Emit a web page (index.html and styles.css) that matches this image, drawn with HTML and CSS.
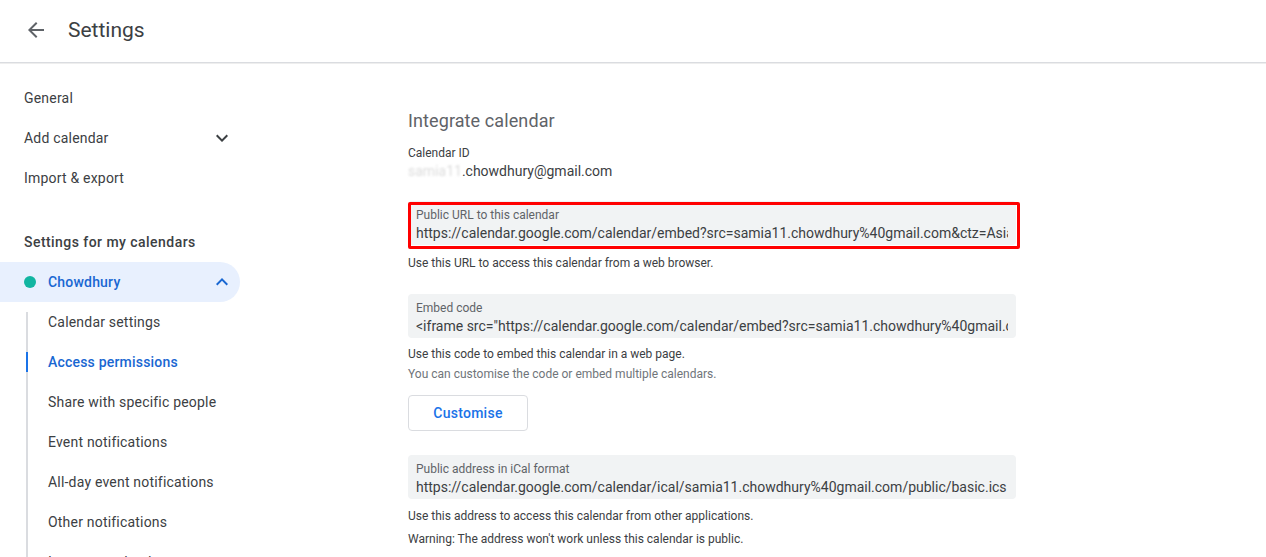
FILE: index.html
```html
<!DOCTYPE html>
<html>
<head>
  <title>Settings</title>
  <link rel="stylesheet" href="styles.css">
</head>
<body>
  <header class="topbar">
    <svg class="back" width="24" height="24" viewBox="0 0 24 24"><path d="M20 11H7.83l5.59-5.59L12 4l-8 8 8 8 1.41-1.41L7.83 13H20v-2z"/></svg>
    <h1>Settings</h1>
  </header>

  <div class="page">
    <nav class="sidebar">
      <div class="item">General</div>
      <div class="item">Add calendar
        <svg class="chev" width="24" height="24" viewBox="0 0 24 24"><path d="M16.59 8.59L12 13.17 7.41 8.59 6 10l6 6 6-6z"/></svg>
      </div>
      <div class="item">Import &amp; export</div>

      <div class="section">Settings for my calendars</div>
      <div class="item cal">
        <span class="dot"></span>Chowdhury
        <svg class="chev" width="24" height="24" viewBox="0 0 24 24"><path d="M7.41 15.41L12 10.83l4.59 4.58L18 14l-6-6-6 6z"/></svg>
      </div>
      <div class="sub">
        <div class="item">Calendar settings</div>
        <div class="item active">Access permissions</div>
        <div class="item">Share with specific people</div>
        <div class="item">Event notifications</div>
        <div class="item">All-day event notifications</div>
        <div class="item">Other notifications</div>
        <div class="item">Integrate calendar</div>
        <div class="item">Remove calendar</div>
      </div>
    </nav>

    <main class="content">
      <h2>Integrate calendar</h2>

      <div class="label">Calendar ID</div>
      <div class="value"><span class="blur">samia11</span>.chowdhury@gmail.com</div>

      <div class="field marked">
        <div class="field-label">Public URL to this calendar</div>
        <div class="field-text">https://calendar.google.com/calendar/embed?src=samia11.chowdhury%40gmail.com&amp;ctz=Asia%2FDhaka</div>
      </div>
      <p class="help first">Use this URL to access this calendar from a web browser.</p>

      <div class="field embed">
        <div class="field-label">Embed code</div>
        <div class="field-text">&lt;iframe src="https://calendar.google.com/calendar/embed?src=samia11.chowdhury%40gmail.com&amp;ctz=Asia%2FDhaka" style="border: 0"&gt;</div>
      </div>
      <p class="help first">Use this code to embed this calendar in a web page.</p>
      <p class="help light">You can customise the code or embed multiple calendars.</p>
      <button class="btn">Customise</button>

      <div class="field ical">
        <div class="field-label">Public address in iCal format</div>
        <div class="field-text">https://calendar.google.com/calendar/ical/samia11.chowdhury%40gmail.com/public/basic.ics</div>
      </div>
      <p class="help addr">Use this address to access this calendar from other applications.</p>
      <p class="help warn">Warning: The address won't work unless this calendar is public.</p>
    </main>
  </div>
</body>
</html>
```

FILE: styles.css
```css
body {
    margin: 0;
    font-family: Roboto, "Liberation Sans", Arial, sans-serif;
    color: #3c4043;
    background-color: #fff;
    height: 557px;
    overflow: hidden;
  }

  .topbar {
    height: 62px;
    display: flex;
    align-items: center;
    border-bottom: 1px solid #dadce0;
    box-shadow: 0 1px 0 #eeeeee;
  }

  .topbar .back {
    fill: #5f6368;
    margin-left: 24px;
    margin-right: 20px;
    margin-top: -2px;
  }

  .topbar h1 {
    margin: 0;
    font-size: 21px;
    font-weight: 400;
    color: #3c4043;
    margin-top: -3px;
  }

  .page {
    display: flex;
  }

  .sidebar {
    width: 240px;
    flex-shrink: 0;
    padding-top: 15px;
    font-size: 14px;
    letter-spacing: 0.2px;
  }

  .sidebar .item {
    height: 40px;
    display: flex;
    align-items: center;
    padding-left: 24px;
    position: relative;
  }

  .sidebar .chev {
    fill: #3c4043;
    margin-left: auto;
    margin-right: 6px;
  }

  .sidebar .section {
    font-weight: 500;
    letter-spacing: 0.45px;
    margin-top: 24px;
    height: 40px;
    display: flex;
    align-items: center;
    padding-left: 24px;
  }

  .sidebar .cal {
    background-color: #e8f0fe;
    border-radius: 0 20px 20px 0;
    color: #1967d2;
    font-weight: 500;
  }

  .sidebar .cal .chev {
    fill: #1967d2;
  }

  .sidebar .dot {
    width: 12px;
    height: 12px;
    border-radius: 50%;
    background-color: #12b5a1;
    margin-right: 12px;
  }

  .sidebar .sub {
    margin-left: 26px;
    background: linear-gradient(#dadce0, #dadce0) no-repeat 0 10px / 2px 100%;
  }

  .sidebar .sub .item {
    padding-left: 22px;
  }

  .sidebar .sub .item.active {
    color: #1967d2;
    font-weight: 500;
  }

  .sidebar .sub .item.active::before {
    content: "";
    position: absolute;
    left: 0;
    top: 10px;
    width: 2px;
    height: 20px;
    background-color: #1a73e8;
  }

  .content {
    margin-left: 168px;
    width: 608px;
    padding-top: 46px;
  }

  .content h2 {
    margin: 0;
    font-size: 18px;
    font-weight: 400;
    line-height: 24px;
    letter-spacing: 0.1px;
    color: #5f6368;
  }

  .label {
    margin-top: 12px;
    font-size: 12px;
    line-height: 16px;
  }

  .value {
    font-size: 14px;
    line-height: 20px;
  }

  .value .blur {
    color: #dcdcdc;
    filter: blur(1.3px);
  }

  .field {
    background-color: #f1f3f4;
    border-radius: 4px;
    padding: 6px 8px 2px;
    white-space: nowrap;
    overflow: hidden;
  }

  .field-label {
    font-size: 12px;
    line-height: 16px;
    color: #5f6368;
  }

  .field-text {
    font-size: 14px;
    line-height: 20px;
    overflow: hidden;
  }

  .field.marked {
    margin-top: 20px;
    position: relative;
    overflow: visible;
  }

  .field.marked .field-text {
    width: 592px;
  }

  .field.marked::after {
    content: "";
    position: absolute;
    top: 1px;
    left: 0;
    right: -4px;
    bottom: -4px;
    border: 3px solid #ff0000;
    border-radius: 2px;
  }

  .help {
    margin: 0;
    font-size: 12px;
    line-height: 16px;
    color: #3c4043;
  }

  .help.first {
    margin-top: 10px;
  }

  .help.light {
    margin-top: 4px;
    color: #70757a;
  }

  .field.embed {
    margin-top: 23px;
  }

  .embed + .help.first {
    margin-top: 8px;
  }

  .btn {
    margin-top: 13px;
    width: 120px;
    height: 36px;
    border: 1px solid #dadce0;
    border-radius: 4px;
    background-color: #fff;
    color: #1a73e8;
    font-family: Roboto, "Liberation Sans", Arial, sans-serif;
    font-size: 14px;
    font-weight: 500;
    letter-spacing: 0.25px;
    cursor: pointer;
  }

  .field.ical {
    margin-top: 24px;
  }

  .help.addr {
    margin-top: 9px;
  }

  .help.warn {
    margin-top: 7px;
  }
```
